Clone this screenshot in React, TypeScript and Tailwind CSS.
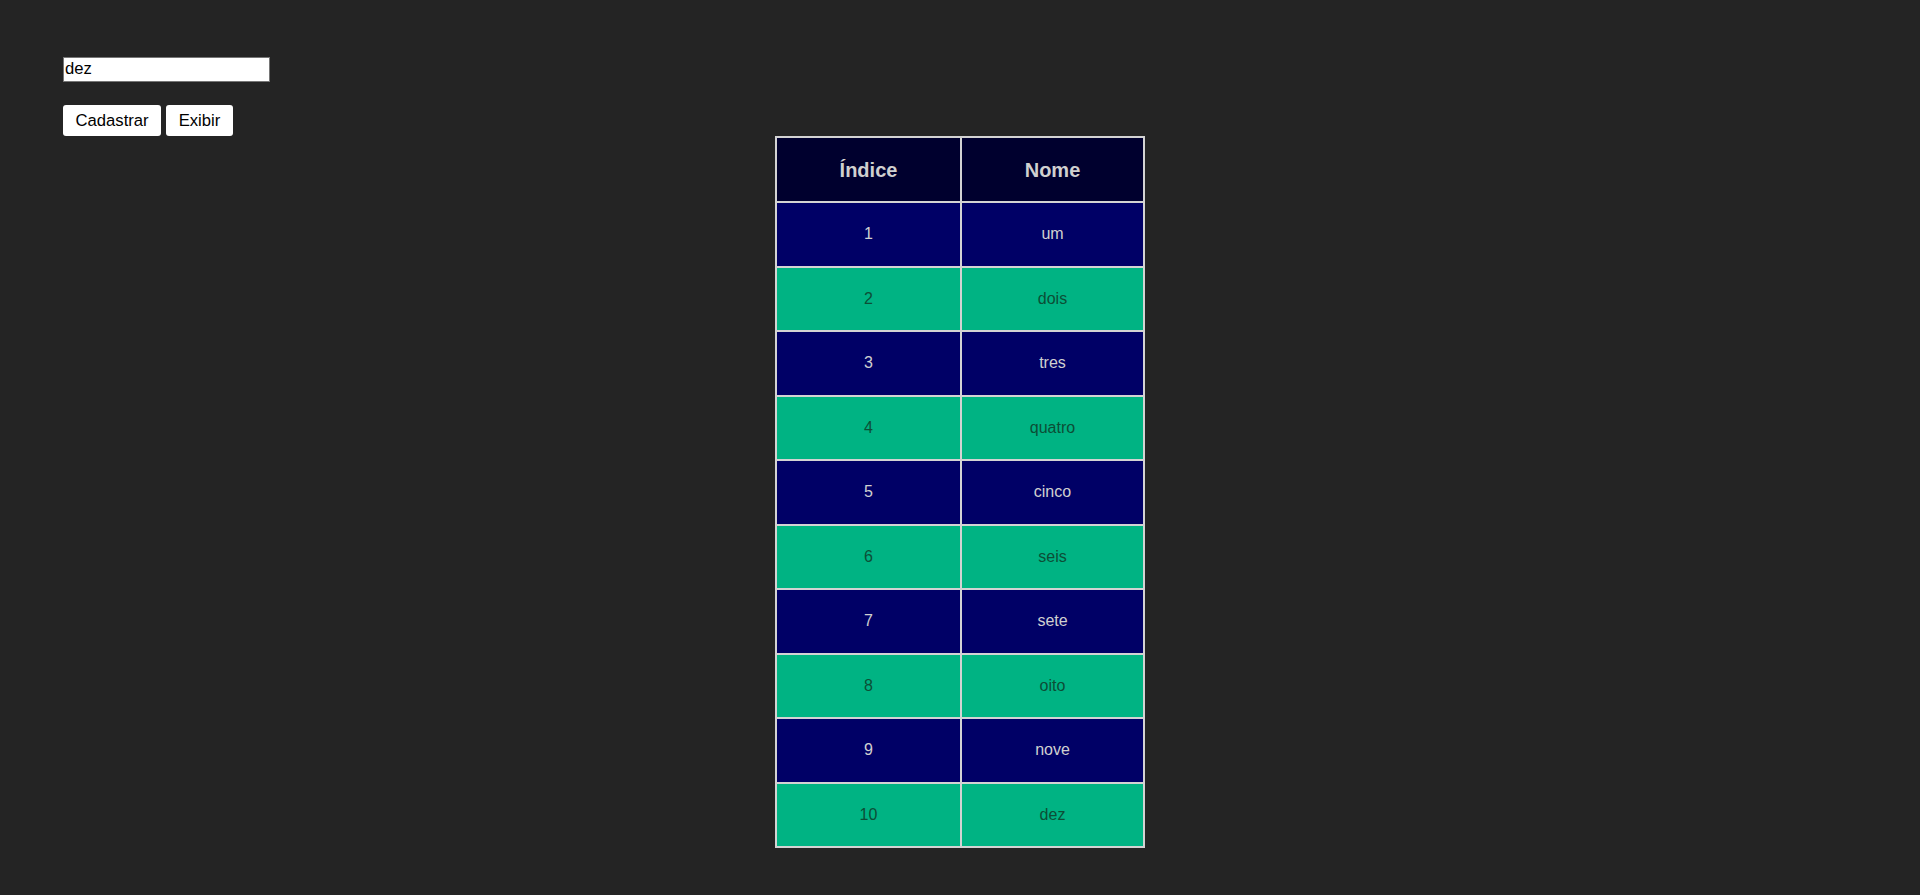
import { useState } from "react";

const nomes = ["um", "dois", "tres", "quatro", "cinco", "seis", "sete", "oito", "nove", "dez"];

export default function App() {
	const [valor, setValor] = useState("dez");

	return (
		<div className="min-h-screen bg-[#242424] font-['Liberation_Sans',Arial,sans-serif]">
			<div className="pl-[63px] pt-[57px]">
				<input
					value={valor}
					onChange={(e) => setValor(e.target.value)}
					className="block w-[207px] h-[24.5px] bg-white border border-[#767676] px-px text-[16.67px] text-black outline-none"
				/>
				<div className="flex gap-[5px] mt-[23.5px]">
					<button className="h-[31px] px-[12.5px] bg-white rounded-[3px] text-[16.67px] text-black">
						Cadastrar
					</button>
					<button className="h-[31px] px-[12.5px] bg-white rounded-[3px] text-[16.67px] text-black">
						Exibir
					</button>
				</div>
			</div>

			<div className="flex justify-center">
				<table className="border-collapse border-2 border-[#d3d3d3]">
					<thead>
						<tr className="bg-[#00002e] text-[#d0d0d0]">
							<th className="w-[185px] h-[65px] border-2 border-[#d3d3d3] text-[20px] font-bold">
								Índice
							</th>
							<th className="w-[183px] h-[65px] border-2 border-[#d3d3d3] text-[20px] font-bold">
								Nome
							</th>
						</tr>
					</thead>
					<tbody>
						{nomes.map((nome, i) => {
							const par = i % 2 === 1;
							return (
								<tr
									key={nome}
									className={par ? "bg-[#00b383] text-[#0c4e36]" : "bg-[#000066] text-[#d0d0d0]"}
								>
									<td className="h-[64.5px] border-2 border-[#d3d3d3] text-center text-[16px]">
										{i + 1}
									</td>
									<td className="h-[64.5px] border-2 border-[#d3d3d3] text-center text-[16px]">
										{nome}
									</td>
								</tr>
							);
						})}
					</tbody>
				</table>
			</div>
		</div>
	);
}
